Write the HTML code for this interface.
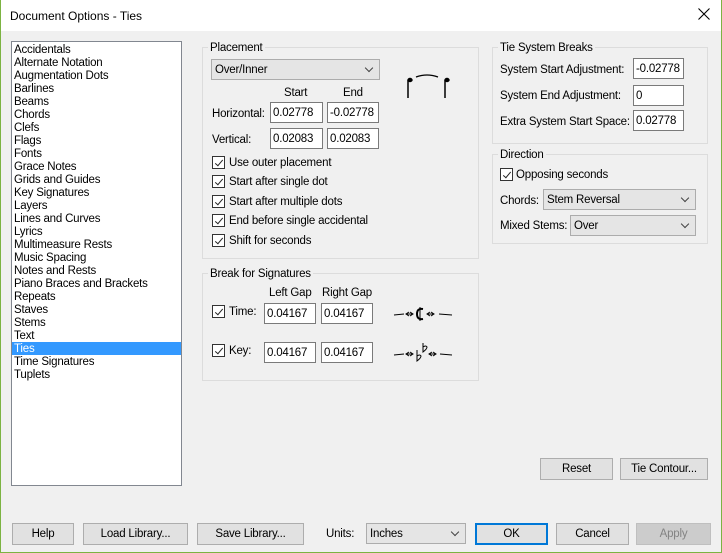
<!DOCTYPE html>
<html><head><meta charset="utf-8"><style>
*{box-sizing:border-box;margin:0;padding:0}
body{width:722px;height:553px;background:#f0f0f0;font-family:"Liberation Sans",sans-serif;font-size:11.5px;letter-spacing:-0.2px;color:#000;position:relative;overflow:hidden}
.a{position:absolute;white-space:nowrap}
.t{padding-top:1px}
.win{position:absolute;left:0;top:0;width:722px;height:553px;border:1px solid #7cb342;border-top:none}
.title{position:absolute;left:0;top:0;width:722px;height:31px;background:#fff}
.list{position:absolute;left:11px;top:41px;width:171px;height:445px;background:#fff;border:1px solid #828790;padding-top:1px}
.list div{height:13px;line-height:14px;padding-left:2px;font-size:11.5px;letter-spacing:-0.2px}
.list .sel{background:#3399ff;color:#fff}
.grp{position:absolute;border:1px solid #dcdcdc}
.lg{position:absolute;background:#f0f0f0;padding:0 2px;top:-7px;left:5px;line-height:14px}
.in{position:absolute;background:#fff;border:1px solid #7a7a7a;height:21px;line-height:20px;padding-left:2px}
.dd{position:absolute;background:#e5e5e5;border:1px solid #acacac;height:21px;line-height:20px;padding-left:3px}
.dd:after{content:"";position:absolute;right:7px;top:5px;width:5px;height:5px;border-right:1px solid #444;border-bottom:1px solid #444;transform:rotate(45deg)}
.cb{position:absolute;width:13px;height:13px;border:1px solid #333;background:#fff}
.cb:after{content:"";position:absolute;left:3.5px;top:0.5px;width:3px;height:7px;border-right:1.3px solid #222;border-bottom:1.3px solid #222;transform:rotate(40deg)}
.btn{position:absolute;background:#e1e1e1;border:1px solid #adadad;height:22px;line-height:21px;text-align:center}
</style></head><body>
<div class="title"></div>
<div class="a" style="left:10px;top:9px;font-size:12px;letter-spacing:0">Document Options - Ties</div>
<svg class="a" style="left:698px;top:8px" width="12" height="12"><path d="M0.5 0.5 L11.5 11.5 M11.5 0.5 L0.5 11.5" stroke="#000" stroke-width="1.1"/></svg>
<div class="win"></div>

<div class="list">
<div>Accidentals</div><div>Alternate Notation</div><div>Augmentation Dots</div><div>Barlines</div><div>Beams</div><div>Chords</div><div>Clefs</div><div>Flags</div><div>Fonts</div><div>Grace Notes</div><div>Grids and Guides</div><div>Key Signatures</div><div>Layers</div><div>Lines and Curves</div><div>Lyrics</div><div>Multimeasure Rests</div><div>Music Spacing</div><div>Notes and Rests</div><div>Piano Braces and Brackets</div><div>Repeats</div><div>Staves</div><div>Stems</div><div>Text</div><div class="sel">Ties</div><div>Time Signatures</div><div>Tuplets</div>
</div>

<div class="grp" style="left:202px;top:47px;width:277px;height:212px"><div class="lg">Placement</div></div>
<div class="dd" style="left:211px;top:59px;width:169px">Over/Inner</div>
<svg class="a" style="left:402px;top:70px" width="50" height="30"><path d="M6 10 V28 M43 10 V28" stroke="#000" stroke-width="1.5"/><ellipse cx="8" cy="10" rx="2.7" ry="2.2" fill="#000"/><ellipse cx="45" cy="10" rx="2.7" ry="2.2" fill="#000"/><path d="M14 7 Q25 3 36 7" stroke="#000" fill="none" stroke-width="1.3"/></svg>
<div class="a t" style="left:284px;top:86px">Start</div>
<div class="a t" style="left:343px;top:86px">End</div>
<div class="a t" style="left:212px;top:107px">Horizontal:</div>
<div class="in" style="left:270px;top:102px;width:53px">0.02778</div>
<div class="in" style="left:327px;top:102px;width:52px">-0.02778</div>
<div class="a t" style="left:212px;top:133px">Vertical:</div>
<div class="in" style="left:270px;top:128px;width:53px">0.02083</div>
<div class="in" style="left:327px;top:128px;width:52px">0.02083</div>
<div class="cb" style="left:212px;top:156px"></div><div class="a t" style="left:229px;top:156px">Use outer placement</div>
<div class="cb" style="left:212px;top:175px"></div><div class="a t" style="left:229px;top:175px">Start after single dot</div>
<div class="cb" style="left:212px;top:195px"></div><div class="a t" style="left:229px;top:195px">Start after multiple dots</div>
<div class="cb" style="left:212px;top:214px"></div><div class="a t" style="left:229px;top:214px">End before single accidental</div>
<div class="cb" style="left:212px;top:234px"></div><div class="a t" style="left:229px;top:234px">Shift for seconds</div>

<div class="grp" style="left:202px;top:273px;width:277px;height:108px"><div class="lg">Break for Signatures</div></div>
<div class="a t" style="left:269px;top:286px">Left Gap</div>
<div class="a t" style="left:322px;top:286px">Right Gap</div>
<div class="cb" style="left:212px;top:305px"></div><div class="a t" style="left:229px;top:305px">Time:</div>
<div class="in" style="left:264px;top:303px;width:52px">0.04167</div>
<div class="in" style="left:321px;top:303px;width:52px">0.04167</div>
<div class="cb" style="left:212px;top:344px"></div><div class="a t" style="left:229px;top:344px">Key:</div>
<div class="in" style="left:264px;top:342px;width:52px">0.04167</div>
<div class="in" style="left:321px;top:342px;width:52px">0.04167</div>
<svg class="a" style="left:392px;top:303px" width="64" height="20"><g stroke="#000" stroke-width="1" fill="none"><path d="M2 12 L12 11 M14 11 H20 M35 11 H41 M47 11 L60 12"/><path d="M17 9 L14 11 L17 13 M18 9 L21 11 L18 13 M38 9 L35 11 L38 13 M39 9 L42 11 L39 13"/><path d="M31 6 Q25 5 25 11 Q25 17 31 16" stroke-width="2"/><path d="M28 4 V18"/></g></svg>
<svg class="a" style="left:392px;top:340px" width="64" height="24"><g stroke="#000" stroke-width="1" fill="none"><path d="M2 15 L12 14 M14 14 H20 M37 14 H43 M48 14 L60 15"/><path d="M17 12 L14 14 L17 16 M18 12 L21 14 L18 16 M40 12 L37 14 L40 16 M41 12 L44 14 L41 16"/><path d="M25 10 V21 Q29 18 29 16 Q28 14 25 16"/><path d="M31 3 V12 Q35 9 35 7 Q34 5 31 7"/></g></svg>

<div class="grp" style="left:492px;top:47px;width:216px;height:97px"><div class="lg">Tie System Breaks</div></div>
<div class="a t" style="left:500px;top:63px">System Start Adjustment:</div>
<div class="in" style="left:633px;top:58px;width:51px">-0.02778</div>
<div class="a t" style="left:500px;top:89px">System End Adjustment:</div>
<div class="in" style="left:633px;top:85px;width:51px">0</div>
<div class="a t" style="left:500px;top:115px">Extra System Start Space:</div>
<div class="in" style="left:633px;top:110px;width:51px">0.02778</div>

<div class="grp" style="left:492px;top:154px;width:216px;height:90px"><div class="lg">Direction</div></div>
<div class="cb" style="left:500px;top:168px"></div><div class="a t" style="left:516px;top:168px">Opposing seconds</div>
<div class="a t" style="left:500px;top:194px">Chords:</div>
<div class="dd" style="left:543px;top:189px;width:153px">Stem Reversal</div>
<div class="a t" style="left:500px;top:219px">Mixed Stems:</div>
<div class="dd" style="left:570px;top:215px;width:126px">Over</div>

<div class="btn" style="left:540px;top:458px;width:73px">Reset</div>
<div class="btn" style="left:620px;top:458px;width:88px">Tie Contour...</div>

<div class="btn" style="left:12px;top:523px;width:62px">Help</div>
<div class="btn" style="left:83px;top:523px;width:105px">Load Library...</div>
<div class="btn" style="left:197px;top:523px;width:107px">Save Library...</div>
<div class="a t" style="left:326px;top:527px">Units:</div>
<div class="dd" style="left:366px;top:523px;width:100px">Inches</div>
<div class="btn" style="left:475px;top:523px;width:73px;border:2px solid #0078d7;line-height:19px">OK</div>
<div class="btn" style="left:556px;top:523px;width:73px">Cancel</div>
<div class="btn" style="left:636px;top:523px;width:75px;background:#ccc;border-color:#bfbfbf;color:#838383">Apply</div>
</body></html>
